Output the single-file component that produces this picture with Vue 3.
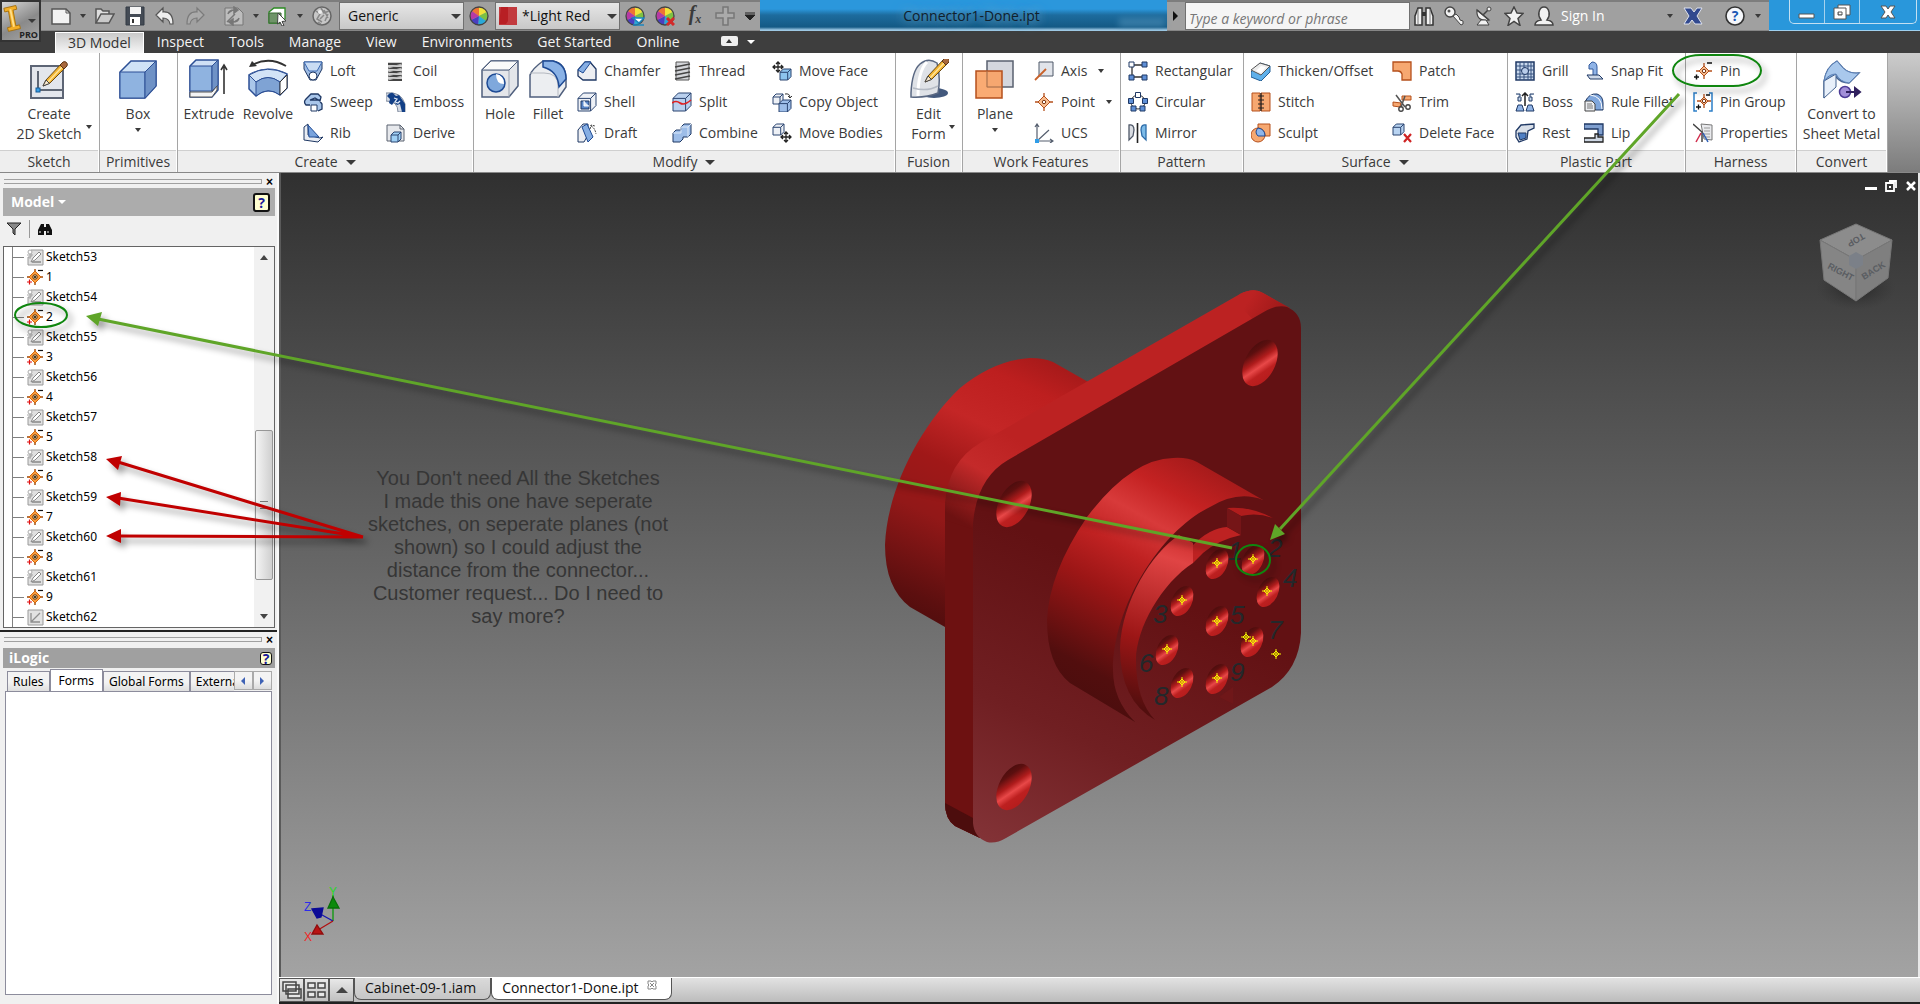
<script setup>
const B = 'stroke="#1f3864"'
const orange = 'fill="#f6a871" stroke="#b5501c"'
const cube = (x, y, s, f = '#eef1f6') =>
  `<path d="M${x} ${y + s * 0.3}l${s * 0.3} ${-s * 0.3}h${s * 0.7}v${s * 0.7}l${-s * 0.3} ${s * 0.3}h${-s * 0.7}z" fill="${f}" stroke="#2a4470"/><path d="M${x} ${y + s * 0.3}h${s * 0.7}v${s * 0.7}m0 ${-s * 0.7}l${s * 0.3} ${-s * 0.3}" fill="none" stroke="#2a4470"/>`
const move = (x, y) =>
  `<path d="M${x} ${y - 5}v10M${x - 5} ${y}h10M${x - 2} ${y - 3}l2-2 2 2M${x - 2} ${y + 3}l2 2 2-2M${x - 3} ${y - 2}l-2 2 2 2M${x + 3} ${y - 2}l2 2-2 2" fill="none" stroke="#222" stroke-width="1.3"/>`
const pencil = (x, y) =>
  `<path d="M${x} ${y}l3-6 16-17 4 4-16 16z" fill="#f3b531" stroke="#6b4a16"/><path d="M${x + 5} ${y - 4}l16-17" stroke="#ffe39a" stroke-width="1.6"/><path d="M${x + 17} ${y - 21}l3-3q2-1 3.500.500t.500 3.500l-3 3z" fill="#a8683c" stroke="#5d3514"/><path d="M${x} ${y}l3-6 3.500 3.500z" fill="#f7e8cf" stroke="#444"/>`
const target = (x, y, r) =>
  `<path d="M${x} ${y - r - 3}v${2 * r + 6}M${x - r - 3} ${y}h${2 * r + 6}" stroke="#b5501c" stroke-width="1.300"/><path d="M${x} ${y - r}l${r} ${r}-${r} ${r}-${r}-${r}z" fill="#f8bd8f" stroke="#b5501c"/><circle cx="${x}" cy="${y}" r="1.700" fill="#fff" stroke="#7a3512"/>`

const art = {
  sketch: `<rect x="2" y="7" width="32" height="32" fill="#e3e6ec" stroke="#5d6575" stroke-width="2"/><path d="M9 12v19h24" fill="none" stroke="#333c4c" stroke-width="1.500"/><rect x="7" y="29" width="4" height="4" fill="#39a0e8" stroke="#155a96"/>${pencil(14, 27)}`,
  box: `<path d="M2 13L13 2h25v25L27 39H2z" fill="#cfe2f6" stroke="#2c4f95" stroke-width="1.500"/><path d="M2 13h25v26H2z" fill="#8fb3e0" stroke="#2c4f95"/><path d="M27 13L38 2v25L27 39z" fill="#6f92c6" stroke="#2c4f95"/>`,
  extrude: `<path d="M1 7l6-6h22v30l-6 7H1z" fill="#cfe0f5" stroke="#2c4f95" stroke-width="1.500"/><path d="M1 7h22v25H1z" fill="#8fb3e0" stroke="#2c4f95"/><path d="M23 7l6-6v25l-6 6z" fill="#6f92c6" stroke="#2c4f95"/><path d="M1 33h22l5-6v4l-5 7H1z" fill="#f4f4f4" stroke="#555"/><path d="M35 35V8M32 11l3-5 3 5" fill="none" stroke="#333" stroke-width="1.600"/>`,
  revolve: `<path d="M1 16Q19 5 39 15v14l-7 7Q20 27 8 37L1 30z" fill="#a9c6ea" stroke="#2c4f95" stroke-width="1.500"/><path d="M1 16l7 7q12-9 24 0l7-8Q19 5 1 16z" fill="#d2e3f6" stroke="#2c4f95"/><path d="M8 23q12-9 24 0v13Q20 27 8 37z" fill="#7fa3d4" stroke="#2c4f95"/><path d="M32 23l7-7v13l-7 7z" fill="#fff" stroke="#333"/><path d="M4 6q17-9 34 1" fill="none" stroke="#333" stroke-width="1.800"/><path d="M1 8l3-6 5 5z" fill="#333"/>`,
  hole: `<path d="M2 11l9-9h27v25l-9 11H2z" fill="#e4e6ea" stroke="#4f5f7d" stroke-width="1.500"/><path d="M2 11h27v27M29 11l9-9" fill="none" stroke="#9aa3b3"/><path d="M2 11l9-9h27l-9 9z" fill="#fafafa" stroke="#4f5f7d"/><circle cx="16" cy="24" r="9" fill="#7fa8dc" stroke="#1e4a94" stroke-width="1.500"/><path d="M16 15a9 9 0 0 1 8 10q-8 0-8-10z" fill="#fff"/>`,
  fillet: `<path d="M2 16Q4 10 15 2h10Q38 5 38 20v8l-7 10H2z" fill="#eceef1" stroke="#4f5f7d" stroke-width="1.500"/><path d="M2 14h14q14 0 14 13v11" fill="none" stroke="#b4b8c0"/><path d="M15 2h10Q38 5 38 20l-7 8Q30 12 15 8z" fill="#8ab2e6" stroke="#1e4a94" stroke-width="1.500"/>`,
  form: `<ellipse cx="25" cy="34" rx="14" ry="5" fill="#43597d"/><path d="M2 34Q3 12 11 5q8-7 17-1 4 14 1 30-12 5-27 4z" fill="#dfe2e7" stroke="#5a6882" stroke-width="1.500"/><path d="M9 37Q9 12 18 3" fill="none" stroke="#fff" stroke-width="3"/><path d="M4 29q14 4 25-2" fill="none" stroke="#b4bac4" stroke-width="1.500"/>${pencil(16, 23)}`,
  plane: `<path d="M12 2h26v26H12z" fill="#d4d7de" stroke="#5a6270" stroke-width="1.500"/><path d="M1 12h26v27H1z" fill="#f9a264" fill-opacity=".9" stroke="#b5501c" stroke-width="1.500"/><path d="M12 12v16h15" fill="none" stroke="#a5714f"/>`,
  sheet: `<path d="M2 22Q4 8 15 2l6 7q6 6 16 5L27 24q-8 0-13-6-6 3-12 21z" fill="#7ea6d8" stroke="#44628f" stroke-width="1.300"/><path d="M2 22l12-7v13L2 39z" fill="#e8f0fa" stroke="#44628f"/><path d="M15 2l6 7q6 6 16 5L27 24q-9-1-13-9Q7 15 2 22 4 8 15 2z" fill="#a9c8ec" stroke="#5a7fb5"/><circle cx="23" cy="33" r="5.500" fill="#a28fd8" stroke="#4c3b96" stroke-width="1.500"/><path d="M24 33h8M33 29l5 4-5 4z" fill="#30205e" stroke="#30205e" stroke-width="2"/>`,
  loft: `<path d="M1 1h18v7l-6 11H7L1 8z" fill="#9dbbe3" ${B}/><path d="M1 1h18l-5 9H6z" fill="#c9dcf3" stroke="#3b6bb5"/><circle cx="10" cy="15" r="4" fill="#fff" ${B}/>`,
  sweep: `<path d="M7 13H3q-3-3 0-6l5-5h7l3 3-1 4-5-3-5 2h9l3 4v5l-4 2" fill="#a9c6ea" ${B} stroke-width="1.300"/><path d="M8 13h6v6H8z" fill="#fff" ${B}/>`,
  rib: `<path d="M1 17V4l4-3v11l12 3 3-1-5 5z" fill="#e9edf3" ${B}/><path d="M5 2l11 12H6z" fill="#79a3dd" stroke="#1e4a94"/>`,
  coil: `<path d="M2 3h14M2 7h14M2 11h14M2 15h14M2 19h14" stroke="#444" stroke-width="2.400"/><path d="M16 3L2 7M16 7L2 11M16 11L2 15M16 15L2 19" stroke="#bbb" stroke-width="1.200"/>`,
  emboss: `<path d="M0 1Q15-1 19 12v8h-7Q12 9 0 9z" fill="#d5dbe5" stroke="#7d889b"/><path d="M1 4q3-4 6-3l3 3 3-1 6 9v8h-3l-2-8-3 1-3-3-2 3-3-2 1-4z" fill="#123f86"/><path d="M8 6l3 1-2 3 3 1 2-2" fill="none" stroke="#dfe8f5" stroke-width="1.300"/>`,
  derive: `<path d="M1 2h13l4 4v12H1z" fill="#e6e8ec" stroke="#5a6270"/><path d="M14 2v4h4" fill="none" stroke="#5a6270"/>${cube(5, 9, 10, '#9fd0f5')}`,
  chamfer: `<path d="M1 9L8 1h5l6 7v11H6l-5-4z" fill="#eceef2" ${B} stroke-width="1.300"/><path d="M1 9L8 1h6L6 12z" fill="#86aee3" stroke="#1e4a94"/>`,
  shell: `${cube(1, 1, 18)}<path d="M4 9h8v8H4z" fill="#5a87c9" ${B}/><path d="M7 9v5h5" fill="#dfeaf8" stroke="#fff"/>`,
  draft: `<path d="M1 7l5-6h5v11l-4 7H1z" fill="#eceef2" ${B}/><path d="M5 4l5-3 6 13-5 5z" fill="#86aee3" stroke="#1e4a94"/><path d="M14 3q4 2 5 8M13 6l1-4 4 1" fill="none" stroke="#333" stroke-dasharray="2 1"/>`,
  thread: `<path d="M4 1h13v18H4z" fill="#d4d6da" stroke="#555"/><path d="M3 6l15-3M3 10l15-3M3 14l15-3M3 18l15-3" stroke="#444" stroke-width="1.400"/>`,
  split: `${cube(1, 1, 18, '#b9d0ee')}<path d="M0 11q4-3 8 0t11-3" fill="none" stroke="#e02020" stroke-width="1.600"/>`,
  combine: `<path d="M1 10l3-3h5V4l3-3h7v10l-3 3h-5v2l-3 3H1z" fill="#9dbde8" ${B}/><path d="M9 4h7v10M1 10h8v-6M16 4l3-3" fill="none" stroke="#dce8f8"/>`,
  moveface: `${move(6, 6)}${cube(8, 8, 11, '#8cc4ee')}`,
  copy: `${cube(1, 2, 10)}${cube(7, 8, 12, '#9dbde8')}<path d="M13 2q5-1 5 4m-2-2l2 2 2-2" fill="none" stroke="#333"/>`,
  movebodies: `${cube(1, 1, 11)}${move(14, 14)}`,
  axis: `<path d="M5 1h14v14H5z" fill="#e1e4ea" stroke="#4f5868"/><path d="M1 19L12 8" stroke="#c8622a" stroke-width="1.800"/>`,
  point: target(10, 10, 6),
  ucs: `<path d="M3 1v17h16M3 18L15 7M1 4l2-3 2 3M16 16l3 2-3 2" fill="none" stroke="#555e6e" stroke-width="1.200"/><rect x="1" y="16" width="4" height="4" fill="#2f9de8"/>`,
  rect: `<path d="M4 4h12M4 4v12h12" fill="none" stroke="#333" stroke-width="1.300"/><path d="M1 1h5v5H1z" fill="#fff" ${B}/><path d="M14 1h5v5h-5zM1 14h5v5H1zM14 14h5v5h-5z" fill="#5f8fd6" ${B}/>`,
  circ: `<circle cx="10" cy="10" r="7" fill="none" stroke="#333"/><path d="M7.500.500h5v5h-5z" fill="#fff" ${B}/><path d="M.500 6.500h5v5h-5zM14.500 6.500h5v5h-5zM3 14h5v5H3zM12 14h5v5h-5z" fill="#5f8fd6" ${B}/>`,
  mirror: `<path d="M1 2q5-1 5 5l-1 6-4 4z" fill="#d9dce2" stroke="#4f5868" stroke-width="1.300"/><path d="M9.500 0v20" stroke="#222" stroke-width="1.600"/><path d="M18 2q-5-1-5 5l1 6 4 4z" fill="#7dbbe8" stroke="#2c6ba8" stroke-width="1.300"/>`,
  thicken: `<path d="M0 11L9 2l10 3v6l-9 9-10-4z" fill="#5fb0ea" stroke="#235f95"/><path d="M0 9L9 2l10 3-9 9z" fill="#ececec" stroke="#555"/><path d="M5 10l5-5 5 1-5 6z" fill="#fff"/>`,
  stitch: `<path d="M1 1h8v18H1zM10 1h9v18h-9z" ${orange}/><path d="M10 1v18M7 4h6M7 8h6M7 12h6M7 16h6" stroke="#222" stroke-width="1.200"/>`,
  sculpt: `<path d="M7 1h12v12H7z" ${orange}/><circle cx="7" cy="12" r="7" ${orange}/><path d="M7 5q7 1 7 8H7q-4-4 0-8z" fill="#8fb6ea" stroke="#1e4a94"/>`,
  patch: `<path d="M1 1h18v18h-9v-6q-1-3-4-3H1z" ${orange} stroke-width="1.300"/>`,
  trim: `<path d="M10 4h9v4h-9zM1 10l8 1-1 4-7-1z" ${orange}/><path d="M4 3l9 12M13 4L9 15" stroke="#555" stroke-width="1.500"/><circle cx="9" cy="17" r="2.200" fill="none" stroke="#444" stroke-width="1.400"/><circle cx="16" cy="15" r="2.200" fill="none" stroke="#444" stroke-width="1.400"/>`,
  del: `${cube(1, 1, 11, '#b9d4f2')}<path d="M12 11l7 8M19 11l-7 8" stroke="#cf2323" stroke-width="2.200"/>`,
  grill: `<path d="M1 1h18v18H1z" fill="#c9d9ee" ${B} stroke-width="1.500"/><path d="M1 5h18M1 9h18M1 13h18M1 16h18M5 1v18M9 1v18M13 1v18M16 1v18" stroke="#35517f"/><circle cx="10" cy="10" r="3.500" fill="#b9cdea" ${B}/>`,
  boss: `<path d="M1 2h4v3H3v4h3V5M19 2h-4v3h2v4h-3V5" fill="#c9d9ee" ${B}/><path d="M10 14V1M7 4l3-3 3 3" fill="none" stroke="#222" stroke-width="1.500"/><path d="M3 13h4l2 6H1zM13 13h4l2 6h-8z" fill="#8fb3e6" ${B}/>`,
  rest: `<path d="M1 8l5-6 13-1v4l-6 3-1 8-8 3-3-5z" fill="#d9dfe8" ${B} stroke-width="1.300"/><path d="M3 10h8v5l-6 2z" fill="#4f7fc4" ${B}/>`,
  snap: `<path d="M8 1q5 0 5 5v9H9V8H5V4z" fill="#8fb3e6" stroke="#31599c"/><path d="M3 14h12l4 4H6z" fill="#cdd9ea" ${B}/>`,
  rule: `<path d="M1 10q4-9 12-8 6 2 6 9v7h-7z" fill="#7fa6dc" ${B}/><path d="M6 3q12 1 12 14" fill="none" stroke="#fff"/><path d="M1 9h7l3 3v7H1z" fill="#eceef2" stroke="#444"/><path d="M3 12h5M3 14h6M3 16h6" stroke="#777"/>`,
  lip: `<path d="M0 1h19v11h-5V6H0z" fill="#7f9fcf" ${B} stroke-width="1.300"/><path d="M0 15h11v-4h3v3h5v5H0z" fill="#cfd8e5" stroke="#222" stroke-width="1.300"/>`,
  pin: `${target(11, 10, 5)}<path d="M1 16h5M3.500 13.500v5M14 2h5" stroke="#111" stroke-width="1.500"/>`,
  pingroup: `<path d="M4 1H1v18h3M16 1h3v18h-3" fill="none" stroke="#2d7fc8" stroke-width="1.500"/>${target(11, 9, 4)}<path d="M3 15h5M5.500 12.500v5M13 3h4" stroke="#111" stroke-width="1.300"/>`,
  props: `<path d="M8 1l11 1v15l-8-1z" fill="#e9eaed" stroke="#777"/><path d="M11 5h6M11 8h6M11 11h6M11 14h6" stroke="#999"/><path d="M0 1l9 8v10" fill="none" stroke="#444" stroke-width="1.500"/><path d="M8 10L3 19" stroke="#d02b4b" stroke-width="1.500"/><path d="M10 10l5 9" stroke="#2d5fb8" stroke-width="1.500"/>`,
  new: '<path d="M1 3h14l4 4v11H1z" fill="#f3f3f3" stroke="#555" stroke-width="1.500"/><path d="M15 3v4h4" fill="none" stroke="#555"/>',
  open: '<path d="M1 17V3h5l2 2h6v3" fill="#ddd" stroke="#555" stroke-width="1.500"/><path d="M1 17l5-9h13l-5 9z" fill="#c9c9c9" stroke="#555" stroke-width="1.500"/>',
  save: '<path d="M1 1h18v18H1z" fill="#444b55" stroke="#333b44"/><path d="M5 1h11v7H5z" fill="#f4f4f4"/><path d="M5 11h10v8H5z" fill="#fff"/><path d="M7 13h2v4H7z" fill="#333"/>',
  undo: '<path d="M1 9l7-7v4q10-1 10 12h-3q-1-6-7-6v4z" fill="#eee" stroke="#555" stroke-width="1.200"/>',
  redo: '<path d="M19 9l-7-7v4Q2 5 2 18h3q1-6 7-6v4z" fill="#aaa" stroke="#7b7b7b" stroke-width="1.200"/>',
  quick: '<path d="M1 2h13l5 5v12H1z" fill="#bdbdbd" stroke="#777"/><path d="M4 8q1-4 6-4M10 1v6l4-3zM15 12q-1 4-6 4M9 13v6l-4-3zM3 16l8-8" fill="#777" stroke="#777" stroke-width="1.500"/>',
  select: '<path d="M1 6l5-4h11v11l-4 4H1z" fill="#fff" stroke="#2b8a22" stroke-width="1.300"/><path d="M1 7h12v10H1z" fill="#6f9468" stroke="#3a6b34"/><path d="M10 7l8 8-4 .500 2 4-2 .500-2-4-2.500 2z" fill="#fff" stroke="#444"/>',
  sphere: '<circle cx="10" cy="10" r="9" fill="#c7c7c7" stroke="#666" stroke-width="1.500"/><path d="M4 5l4 3-3 5 5 3M9 2l3 5 5-2M12 9l-4 4M16 8l-3 7M6 16l3 2M12 4l4 8" fill="none" stroke="#888" stroke-width="1.500"/><circle cx="8" cy="6" r="2" fill="#eee"/>',
  wheel: '<path d="M10 10V1a9 9 0 0 1 8 5z" fill="#f1e33a"/><path d="M10 10l8-4a9 9 0 0 1-1 9z" fill="#7cc142"/><path d="M10 10l7 5a9 9 0 0 1-8 4z" fill="#2aa9d8"/><path d="M10 10l-1 9a9 9 0 0 1-7-5z" fill="#4a3fc0"/><path d="M10 10l-8 4a9 9 0 0 1 1-9z" fill="#b63aa5"/><path d="M10 10L3 5a9 9 0 0 1 7-4z" fill="#ee7433"/><circle cx="10" cy="10" r="9" fill="none" stroke="#444" stroke-width="1.300"/>',
  plus: '<path d="M8 1h5v6h6v5h-6v7H8v-7H1V7h7z" fill="#aaa" stroke="#777" stroke-width="1.500"/>',
  binoc: '<path d="M1 10l3-8h4v17H1zM19 10l-3-8h-4v17h7z" fill="#f2f2f2" stroke="#333" stroke-width="1.500"/><path d="M8 6h4v4H8z" fill="#333"/><path d="M4 3v16M16 3v16" stroke="#777"/>',
  key: '<circle cx="6" cy="6" r="5" fill="#f2f2f2" stroke="#444" stroke-width="1.400"/><circle cx="5" cy="5" r="1.500" fill="#555"/><path d="M9 10l8 9 2-1v-3l-3-1-1-3-3-3z" fill="#f2f2f2" stroke="#444"/>',
  dish: '<path d="M3 4q-1 12 12 10z" fill="#f2f2f2" stroke="#444" stroke-width="1.200"/><path d="M3 4l12 10M9 9l6-6" stroke="#444" stroke-width="1.500"/><circle cx="15" cy="3" r="2" fill="#f2f2f2" stroke="#444"/><path d="M7 14l-4 5h12l-3-5z" fill="#f2f2f2" stroke="#444"/>',
  star: '<path d="M10 1l3 6 6 .500-5 5 2 7-6-4-6 4 2-7-5-5L7 7z" fill="#f2f2f2" stroke="#444" stroke-width="1.500"/>',
  person: '<path d="M1 19q0-4 6-5-3-4-2-8 1-5 5-5t5 5q1 4-2 8 6 1 6 5z" fill="#f2f2f2" stroke="#444" stroke-width="1.500"/>',
  exch: '<path d="M1 2h7l3 4 3-4h5l-5 8 5 8h-7l-3-4-3 4H1l5-8z" fill="#31498f" stroke="#dfe3ee"/>',
  help: '<circle cx="10" cy="10" r="9" fill="#f5f7fb" stroke="#333" stroke-width="1.600"/>',
  tpin: '<path d="M8 0v16M0 8h16" stroke="#a04808" stroke-width="1.400"/><path d="M8 2l6 6-6 6-6-6z" fill="#fb9b3c" stroke="#d0680c"/><circle cx="8" cy="8" r="2.200" fill="#fff0c0" stroke="#5a2b05"/><circle cx="8" cy="8" r="1" fill="#000"/><path d="M0 13h5M2.500 10.500v5" stroke="#e01010" stroke-width="1.200"/><path d="M11 1.500h5" stroke="#111" stroke-width="1.200"/>',
  tsketch: '<path d="M4 1h12v15H1V8h3z" fill="#e0e0e0" stroke="#9a9a9a"/><path d="M5 13h9" stroke="#888" stroke-width="1.500"/><path d="M4 13l2-4 6-6 2 2-6 6z" fill="#fff" stroke="#888"/><circle cx="3" cy="3" r="2" fill="#fff" stroke="#aaa"/><path d="M3 5v5M0 6h6" stroke="#aaa"/>',
  tplain: '<path d="M1 1h15v15H1z" fill="#e2e2e2" stroke="#9a9a9a"/><path d="M4 4v9h9M4 13l9-9" stroke="#8f8f8f" stroke-width="1.300" fill="none"/>'
}

const panels = [
  { k: 'sketch', name: 'Sketch', cols: [{ big: 'sketch', lines: ['Create', '2D Sketch'], split: true }] },
  { k: 'prim', name: 'Primitives', cols: [{ big: 'box', lines: ['Box'], drop: true }] },
  { k: 'create', name: 'Create', more: true, cols: [
    { big: 'extrude', lines: ['Extrude'] }, { big: 'revolve', lines: ['Revolve'] },
    { rows: [['loft', 'Loft'], ['sweep', 'Sweep'], ['rib', 'Rib']] },
    { rows: [['coil', 'Coil'], ['emboss', 'Emboss'], ['derive', 'Derive']] }] },
  { k: 'modify', name: 'Modify', more: true, cols: [
    { big: 'hole', lines: ['Hole'] }, { big: 'fillet', lines: ['Fillet'] },
    { rows: [['chamfer', 'Chamfer'], ['shell', 'Shell'], ['draft', 'Draft']] },
    { rows: [['thread', 'Thread'], ['split', 'Split'], ['combine', 'Combine']] },
    { rows: [['moveface', 'Move Face'], ['copy', 'Copy Object'], ['movebodies', 'Move Bodies']] }] },
  { k: 'fusion', name: 'Fusion', cols: [{ big: 'form', lines: ['Edit', 'Form'], split: true }] },
  { k: 'work', name: 'Work Features', cols: [
    { big: 'plane', lines: ['Plane'], drop: true },
    { rows: [['axis', 'Axis', true], ['point', 'Point', true], ['ucs', 'UCS']] }] },
  { k: 'pattern', name: 'Pattern', cols: [{ rows: [['rect', 'Rectangular'], ['circ', 'Circular'], ['mirror', 'Mirror']] }] },
  { k: 'surface', name: 'Surface', more: true, cols: [
    { rows: [['thicken', 'Thicken/Offset'], ['stitch', 'Stitch'], ['sculpt', 'Sculpt']] },
    { rows: [['patch', 'Patch'], ['trim', 'Trim'], ['del', 'Delete Face']] }] },
  { k: 'plastic', name: 'Plastic Part', cols: [
    { rows: [['grill', 'Grill'], ['boss', 'Boss'], ['rest', 'Rest']] },
    { rows: [['snap', 'Snap Fit'], ['rule', 'Rule Fillet'], ['lip', 'Lip']] }] },
  { k: 'harness', name: 'Harness', cols: [{ rows: [['pin', 'Pin'], ['pingroup', 'Pin Group'], ['props', 'Properties']] }] },
  { k: 'convert', name: 'Convert', cols: [{ big: 'sheet', lines: ['Convert to', 'Sheet Metal'] }] }
]
const tabs = ['3D Model', 'Inspect', 'Tools', 'Manage', 'View', 'Environments', 'Get Started', 'Online']
const tree = []
for (let n = 53; n <= 62; n++) {
  tree.push({ icon: n === 62 ? 'tplain' : 'tsketch', label: 'Sketch' + n })
  if (n < 62) tree.push({ icon: 'tpin', label: String(n - 52) })
}
const pins = [[1217, 564], [1253, 560], [1268, 592], [1182, 601], [1217, 621], [1252, 642], [1167, 650], [1182, 683], [1217, 679]]
const marks = [[1217, 563], [1253, 559], [1267, 591], [1182, 600], [1217, 621], [1246, 637], [1253, 641], [1167, 649], [1182, 682], [1217, 678], [1276, 654]]
const digits = [['1', 1228, 560], ['2', 1268, 557], ['3', 1153, 623], ['4', 1283, 587], ['5', 1230, 624], ['6', 1139, 672], ['7', 1268, 639], ['8', 1154, 705], ['9', 1230, 681]]
const bores = [[1260, 363], [1014, 504], [1014, 787]]
</script>

<template>
  <div class="app">
    <header class="titlebar">
      <div class="quick">
        <button class="ib" aria-label="New"><svg viewBox="0 0 20 20" v-html="art.new"></svg></button>
        <i class="tri mid"></i>
        <button class="ib" aria-label="Open"><svg viewBox="0 0 20 20" v-html="art.open"></svg></button>
        <button class="ib" aria-label="Save"><svg viewBox="0 0 20 20" v-html="art.save"></svg></button>
        <button class="ib" aria-label="Undo"><svg viewBox="0 0 20 20" v-html="art.undo"></svg></button>
        <button class="ib redo" aria-label="Redo"><svg viewBox="0 0 20 20" v-html="art.redo"></svg></button>
        <button class="ib" aria-label="Update"><svg viewBox="0 0 20 20" v-html="art.quick"></svg></button>
        <i class="tri mid"></i>
        <button class="ib" aria-label="Select"><svg viewBox="0 0 20 20" v-html="art.select"></svg></button>
        <i class="tri mid"></i>
        <button class="ib" aria-label="Material"><svg viewBox="0 0 20 20" v-html="art.sphere"></svg></button>
        <div class="combo"><select aria-label="Material"><option>Generic</option></select><i class="tri"></i></div>
        <button class="ib tight" aria-label="Appearance"><svg viewBox="0 0 20 20" v-html="art.wheel"></svg></button>
        <div class="combo swatch"><svg viewBox="0 0 18 18"><path d="M0 0h18v18H0z" fill="#c23a3e" /><path d="M2 0h7v14l-2 3H0z" fill="#b81f24" /></svg><select aria-label="Appearance"><option>*Light Red</option></select><i class="tri"></i></div>
        <button class="ib" aria-label="Adjust"><svg viewBox="0 0 20 20"><g v-html="art.wheel"></g><path d="M8 12h11l-5 5zM8 19h11" fill="#fff" stroke="#1b86c0" stroke-width="1.500" /></svg></button>
        <button class="ib" aria-label="Clear"><svg viewBox="0 0 20 20"><g v-html="art.wheel"></g><path d="M12 12l7 7M19 12l-7 7" stroke="#d42a2a" stroke-width="3" /></svg></button>
        <button class="ib fx" aria-label="Parameters">f<sub>x</sub></button>
        <button class="ib" aria-label="Add"><svg viewBox="0 0 20 20" v-html="art.plus"></svg></button>
        <svg class="custom" viewBox="0 0 10 8"><path d="M0 1h10M0 3h10L5 8z" fill="#222" stroke="#222" /></svg>
      </div>
      <div class="caption"><span>Connector1-Done.ipt</span><i class="haze"></i></div>
      <div class="info">
        <i class="play"></i>
        <input type="text" aria-label="Search" placeholder="Type a keyword or phrase">
        <button class="ib" aria-label="Search help"><svg viewBox="0 0 20 20" v-html="art.binoc"></svg></button>
        <button class="ib" aria-label="Subscription"><svg viewBox="0 0 20 20" v-html="art.key"></svg></button>
        <button class="ib" aria-label="Communication"><svg viewBox="0 0 20 20" v-html="art.dish"></svg></button>
        <button class="ib" aria-label="Favorites"><svg viewBox="0 0 20 20" v-html="art.star"></svg></button>
        <button class="ib" aria-label="Account"><svg viewBox="0 0 20 20" v-html="art.person"></svg></button>
        <a href="#" class="signin">Sign In</a>
        <i class="tri"></i>
        <button class="ib" aria-label="Exchange"><svg viewBox="0 0 20 20" v-html="art.exch"></svg></button>
        <button class="ib help" aria-label="Help"><svg viewBox="0 0 20 20" v-html="art.help"></svg><b>?</b></button>
        <i class="tri"></i>
      </div>
      <div class="winbtns">
        <div class="wgroup">
          <button aria-label="Minimize"><svg viewBox="0 0 20 16"><path d="M2 10h15v4H2z" fill="#fff" stroke="#555" /></svg></button>
          <button aria-label="Restore"><svg viewBox="0 0 20 16"><path d="M6 1h12v10H6z" fill="#fff" stroke="#555" /><path d="M2 4h12v11H2zM6 8h4v3H6z" fill="#fff" stroke="#555" fill-rule="evenodd" /></svg></button>
          <button aria-label="Close"><svg viewBox="0 0 20 16"><path d="M3 2h5l2 3 2-3h5l-4 6 4 6h-5l-2-3-2 3H3l4-6z" fill="#fff" stroke="#555" /></svg></button>
        </div>
      </div>
      <button class="appbtn" aria-label="Application menu">
        <svg viewBox="0 0 26 30"><path d="M2 5l13-3 1 4-4 1 3 17 4-1 1 4-13 3-1-4 4-1L7 8 3 9z" fill="#f3ae26" stroke="#a5700c" /><path d="M9 6l4 19" stroke="#ffdf8a" stroke-width="2" /></svg>
        <i class="tri"></i><span>PRO</span>
      </button>
    </header>

    <nav class="tabs">
      <a v-for="(t, i) in tabs" :key="t" href="#" :class="{ on: i === 0 }">{{ t }}</a>
      <span class="pill"><i></i></span><i class="tri light"></i>
    </nav>

    <section class="ribbon">
      <div v-for="p in panels" :key="p.k" class="panel" :class="p.k">
        <div class="cmds">
          <div v-for="(c, ci) in p.cols" :key="ci" class="col">
            <button v-if="c.big" class="big" :class="{ splitbtn: c.split }">
              <svg viewBox="0 0 40 40" v-html="art[c.big]"></svg>
              <span v-for="l in c.lines" :key="l">{{ l }}</span>
              <i v-if="c.drop || c.split" class="tri"></i>
            </button>
            <template v-else>
              <button v-for="r in c.rows" :key="r[1]" class="cmd">
                <svg viewBox="0 0 20 20" v-html="art[r[0]]"></svg><span>{{ r[1] }}</span><i v-if="r[2]" class="tri"></i>
              </button>
            </template>
          </div>
        </div>
        <div class="pname">{{ p.name }}<i v-if="p.more" class="tri big-tri"></i></div>
      </div>
      <div class="rest-fill"></div>
    </section>

    <main class="work-area">
      <aside class="side">
        <div class="grip"><span></span><button aria-label="Close panel">×</button></div>
        <div class="phead">Model<i class="tri light"></i><span class="q">?</span></div>
        <div class="ptools">
          <svg viewBox="0 0 16 14"><path d="M1 1h14L9 7v6l-2-2V7z" fill="#888" stroke="#222" /></svg>
          <span></span>
          <svg viewBox="0 0 16 14"><path d="M1 8l3-6h3v11H1zM15 8l-3-6H9v11h6zM7 5h2v4H7z" fill="#111" /><path d="M3 9v2M11 9v2" stroke="#fff" /></svg>
        </div>
        <div class="treebox">
          <ul>
            <li v-for="n in tree" :key="n.label"><svg viewBox="0 0 17 17" v-html="art[n.icon]"></svg>{{ n.label }}</li>
          </ul>
          <div class="scroll"><i class="up"></i><div class="thumb"><b></b></div><i class="down"></i></div>
        </div>
        <div class="split"></div>
        <div class="grip"><span></span><button aria-label="Close panel">×</button></div>
        <div class="phead small">iLogic<span class="q">?</span></div>
        <div class="ftabs">
          <button>Rules</button><button class="on">Forms</button><button>Global Forms</button><button class="cut">External</button>
          <button class="nav" aria-label="Previous tab"><i class="la"></i></button><button class="nav" aria-label="Next tab"><i class="ra"></i></button>
        </div>
        <div class="fbox"></div>
      </aside>

      <div class="docs">
        <div class="view">
          <svg class="model" viewBox="281 173 1637 804" preserveAspectRatio="xMinYMin meet">
            <defs>
              <linearGradient id="gBack" gradientUnits="userSpaceOnUse" x1="920" y1="640" x2="1060" y2="345">
                <stop offset="0" stop-color="#480c0c" /><stop offset=".12" stop-color="#5c0f0f" /><stop offset=".36" stop-color="#921818" /><stop offset=".52" stop-color="#a01818" /><stop offset=".68" stop-color="#c42626" /><stop offset=".84" stop-color="#bd1f1f" /><stop offset="1" stop-color="#9a1717" />
              </linearGradient>
              <linearGradient id="gFront" gradientUnits="userSpaceOnUse" x1="1085" y1="710" x2="1225" y2="455">
                <stop offset="0" stop-color="#4a0d0d" /><stop offset=".13" stop-color="#520e0e" /><stop offset=".4" stop-color="#9c1616" /><stop offset=".55" stop-color="#c02222" /><stop offset=".68" stop-color="#d83a3a" /><stop offset=".8" stop-color="#c42222" /><stop offset="1" stop-color="#981717" />
              </linearGradient>
              <linearGradient id="gWall" gradientUnits="userSpaceOnUse" x1="1145" y1="710" x2="1205" y2="530">
                <stop offset="0" stop-color="#520e0e" /><stop offset=".35" stop-color="#9c1616" /><stop offset=".8" stop-color="#e04444" /><stop offset="1" stop-color="#c42222" />
              </linearGradient>
              <linearGradient id="gFace" gradientUnits="userSpaceOnUse" x1="985" y1="845" x2="1110" y2="570">
                <stop offset="0" stop-color="#833337" /><stop offset=".45" stop-color="#701f22" /><stop offset="1" stop-color="#621113" />
              </linearGradient>
              <linearGradient id="gSide" gradientUnits="userSpaceOnUse" x1="950" y1="515" x2="1000" y2="430">
                <stop offset="0" stop-color="#6d1111" /><stop offset=".55" stop-color="#c42a2a" /><stop offset="1" stop-color="#bc2222" />
              </linearGradient>
              <linearGradient id="gEnd" gradientUnits="userSpaceOnUse" x1="1255" y1="290" x2="1290" y2="312">
                <stop offset="0" stop-color="#bc2222" /><stop offset="1" stop-color="#981717" />
              </linearGradient>
              <linearGradient id="gHole" x1=".9" y1=".85" x2=".1" y2=".15">
                <stop offset="0" stop-color="#b51c1c" /><stop offset=".25" stop-color="#bd2020" /><stop offset=".42" stop-color="#e84848" /><stop offset=".58" stop-color="#b01c1c" /><stop offset=".82" stop-color="#5c0f0f" /><stop offset="1" stop-color="#4a0d0d" />
              </linearGradient>
            </defs>
            <path d="M945 627L910 607Q885 588 885 545C887 490 920 426 960 388Q994 360 1030 358Q1044 358 1053 362L1090 383 1040 500 945 560z" fill="url(#gBack)" />
            <path d="M945 503Q948 462 980 443L1240 294Q1254 287 1263 293L1287 307 1240 360 1008 480 973 530V823L980 838 955 826Q945 819 945 803z" fill="url(#gSide)" />
            <path d="M1240 294Q1254 287 1263 293L1290 308 1255 322 1235 300z" fill="url(#gEnd)" />
            <path d="M945 803V520l30 10V823l5 15-25-12Q945 819 945 803z" fill="#6d1111" />
            <path d="M945 803l28 15 7 20-25-12Q945 819 945 803z" fill="#4c0d0d" />
            <path d="M973 523Q977 478 1008 460L1262 313Q1276 304 1287 307Q1301 313 1301 328V633Q1299 669 1272 687L1006 838Q996 844 987 842Q974 837 973 823z" fill="url(#gFace)" />
            <g fill="url(#gHole)">
              <ellipse v-for="(b, i) in bores" :key="i" :cx="b[0]" :cy="b[1]" rx="15" ry="25" :transform="`rotate(28 ${b[0]} ${b[1]})`" />
            </g>
            <path d="M1135 722L1070 683Q1047 665 1047 620Q1049 573 1087 517Q1131 459 1173 458Q1187 457 1197 462L1263 500 1220 580z" fill="url(#gFront)" />
            <path d="M1135 722Q1113 700 1113 670C1113 605 1162 530 1210 507Q1238 490 1263 500L1285 520V640L1170 722z" fill="url(#gFace)" />
            <path d="M1155 720Q1120 700 1120 648C1122 600 1152 553 1179 535L1193 543V563C1162 583 1136 628 1136 660Q1136 700 1155 720z" fill="url(#gWall)" />
            <path d="M1193 545Q1210 528 1227 527L1241 535Q1218 540 1203 553L1193 563z" fill="#bd2222" />
            <path d="M1227 508Q1250 506 1273 518Q1257 512 1241 516z" fill="#b01c1c" />
            <path d="M1227 508L1241 516V535L1227 527z" fill="#751517" />
            <path d="M1219 697L1233 687V704z" fill="#6f1719" />
            <g fill="url(#gHole)">
              <ellipse v-for="(b, i) in pins" :key="i" :cx="b[0]" :cy="b[1]" rx="10" ry="16" :transform="`rotate(26 ${b[0]} ${b[1]})`" />
            </g>
            <text v-for="d in digits" :key="d[0]" :x="d[1]" :y="d[2]" class="digit">{{ d[0] }}</text>
            <path v-for="(m, i) in marks" :key="i" :d="`M${m[0]} ${m[1] - 3}l3 3-3 3-3-3zm0-2v10m-5-5h10`" fill="none" stroke="#f6f600" />
            <g stroke-width="1.300">
              <path d="M333 921v-26" stroke="#0a9a0a" /><path d="M333 897l6 11h-11z" fill="#0c8a0c" stroke="#087008" />
              <path d="M333 921l-20-11" stroke="#1414b0" /><path d="M312 909l11-1-2 9-4 1z" fill="#0a0a96" stroke="#0a0a96" />
              <path d="M333 921l-20 12" stroke="#b01010" /><path d="M312 934l5-9 6 9z" fill="#b81414" stroke="#900c0c" />
            </g>
            <text x="329" y="896" class="ax" fill="#28d828">Y</text>
            <text x="304" y="911" class="ax" fill="#2c2ce8">Z</text>
            <text x="304" y="941" class="ax" fill="#f02828">X</text>
          </svg>
          <div class="mdi">
            <button aria-label="Minimize document"><svg viewBox="0 0 12 12"><path d="M0 7h12v3H0z" fill="#fff" /></svg></button>
            <button aria-label="Restore document"><svg viewBox="0 0 12 12"><path d="M4 1h7v7M1 3h8v8H1z" fill="none" stroke="#fff" stroke-width="1.800" /><path d="M4 6h2v2H4z" fill="#fff" /></svg></button>
            <button aria-label="Close document"><svg viewBox="0 0 12 12"><path d="M2 2l8 8M10 2l-8 8" stroke="#fff" stroke-width="2.500" /></svg></button>
          </div>
          <svg class="cube" viewBox="0 0 80 90">
            <defs><radialGradient id="gShade"><stop offset="0" stop-color="#1c1c1c" stop-opacity=".8" /><stop offset="1" stop-color="#333" stop-opacity="0" /></radialGradient></defs>
            <ellipse cx="40" cy="66" rx="40" ry="22" fill="url(#gShade)" />
            <path d="M4 18L40 2l36 16-36 20z" fill="#8c8c8c" stroke="#777" />
            <path d="M4 18l36 20v41L8 58z" fill="#858585" stroke="#777" />
            <path d="M76 18L40 38v41l32-23z" fill="#7f7f7f" stroke="#777" />
            <path d="M33 34l7-4 7 4v9l-7 4-7-4z" fill="#7b8088" />
            <text x="40" y="21" text-anchor="middle" transform="rotate(150 40 18)">TOP</text>
            <text x="11" y="46" transform="rotate(28 11 46)">RIGHT</text>
            <text x="48" y="58" transform="rotate(-32 48 58)">BACK</text>
          </svg>
          <p class="note">You Don't need All the Sketches<br>I made this one have seperate<br>sketches, on seperate planes (not<br>shown) so I could adjust the<br>distance from the connector...<br>Customer request... Do I need to<br>say more?</p>
        </div>
        <div class="docbar">
          <button class="db" aria-label="Cascade"><svg viewBox="0 0 20 18"><path d="M1 1h13v9H1zM4 4h13v9H4zM6 8h13v9H6z" fill="#e8e8e8" stroke="#444" stroke-width="1.500" /></svg></button>
          <button class="db" aria-label="Tile"><svg viewBox="0 0 20 18"><path d="M1 2h7v5H1zM11 2h7v5h-7zM1 11h7v5H1zM11 11h7v5h-7z" fill="#e8e8e8" stroke="#444" stroke-width="1.500" /></svg></button>
          <button class="db" aria-label="List"><i class="up"></i></button>
          <button class="dt">Cabinet-09-1.iam</button>
          <button class="dt on">Connector1-Done.ipt<svg viewBox="0 0 10 10"><path d="M1 1h3l1 1 1-1h3v3L8 5l1 1v3H6L5 8 4 9H1V6l1-1-1-1zM3 3l4 4M7 3L3 7" fill="none" stroke="#888" /></svg></button>
        </div>
      </div>
    </main>

    <svg class="callouts" viewBox="0 0 1920 1004" preserveAspectRatio="xMinYMin meet">
      <g fill="none" stroke="#0f860f" stroke-width="2">
        <ellipse cx="41" cy="315" rx="26" ry="12" />
        <rect x="1673" y="55" width="88" height="31" rx="28" ry="16" />
        <ellipse cx="1253" cy="560" rx="17" ry="15" />
      </g>
      <g stroke="#5fa528" fill="#5fa528">
        <path d="M1232 548L98 319M1679 94L1280 529" fill="none" stroke-width="3" />
        <path d="M86 316l16-4-4 14zM1270 540l5-16 10 10z" stroke="none" />
      </g>
      <g stroke="#c00000" fill="#c00000">
        <path d="M363 537L118 462M363 537L118 498M363 537L118 536" fill="none" stroke-width="3" />
        <path d="M106 459l16-3-4 14zM106 497l15-5-1 14zM106 536l15-7v14z" stroke="none" />
      </g>
    </svg>
  </div>
</template>

<style>
body { margin: 0; }
</style>
<style scoped>
.app { position: relative; min-height: 100vh; display: flex; flex-direction: column; overflow: hidden; background: #f0f0f0; font: 14px/20px "Open Sans", "Noto Sans", sans-serif; color: #3a3a3a; }
button { font: inherit; color: inherit; background: none; border: 0; padding: 0; margin: 0; }
a { color: inherit; text-decoration: none; }
svg { display: block; flex: none; }
.tri { display: block; flex: none; width: 0; height: 0; border: 3px solid transparent; border-top: 4px solid #3a3a3a; border-bottom: 0; }
.tri.light { border-top-color: #fff; border-left-width: 4px; border-right-width: 4px; }

.titlebar { position: relative; display: flex; height: 31px; background: #2a9ade; }
.quick, .info { display: flex; align-items: center; background: #a0a0a0; border-top: 2px solid #7d7d7d; border-bottom: 1px solid #868686; box-sizing: border-box; }
.quick { width: 760px; padding-left: 51px; gap: 10px; }
.ib svg { width: 20px; height: 20px; }
.redo { margin-right: 9px; }
.tri.mid { margin: 0 -1px; }
.combo { position: relative; width: 125px; height: 28px; margin-left: -3px; }
.combo + .ib { margin-left: -5px; }
.ib.tight { margin-right: -1px; }
.combo select { appearance: none; width: 100%; height: 100%; box-sizing: border-box; border: 1px solid #707070; border-radius: 0; background: linear-gradient(#e6e6e6, #c8c8c8); padding: 0 0 0 8px; font: inherit; color: #111; }
.combo .tri { position: absolute; right: 3px; top: 12px; border-width: 5px 5px 0; }
.swatch svg { position: absolute; left: 4px; top: 5px; width: 18px; height: 18px; }
.combo.swatch select { padding-left: 26px; }
.fx { font: italic bold 20px/24px "Liberation Serif", serif; width: 20px; }
.fx sub { font-size: 12px; vertical-align: -3px; }
.custom { width: 10px; height: 8px; }
.caption { flex: 1; position: relative; display: flex; justify-content: center; align-items: center; background: linear-gradient(#2b97dc 0 9px, #1d6c9e 15px, #145a85 27px, #9dc8e4 30px); color: #10202c; }
.caption span { margin-left: 16px; text-shadow: 0 0 10px #6fa9cc, 0 0 14px #6fa9cc; }
.haze { position: absolute; right: 2px; top: 18px; width: 46px; height: 9px; background: #4d8fb8; filter: blur(3px); opacity: .6; }
.info { width: 602px; gap: 10px; padding-left: 6px; }
.play { width: 0; border: 5px solid transparent; border-left-color: #111; border-right: 0; }
.info input { width: 225px; height: 28px; box-sizing: border-box; border: 1px solid #707070; background: #f5f5f5; font: italic 14px/20px "Open Sans", "Noto Sans", sans-serif; padding: 4px 3px 0; margin-left: -3px; margin-right: -6px; }
.info input::placeholder { color: #777; opacity: 1; }
.signin { color: #fff; width: 96px; margin-left: -3px; }
.help { position: relative; margin-left: 12px; }
.help b { position: absolute; inset: 0; text-align: center; color: #1c57b5; }
.winbtns { flex: 0 0 151px; background: #2997db; border-bottom: 1px solid #9fd0ee; box-sizing: border-box; padding-left: 20px; }
.wgroup { display: flex; width: 128px; height: 24px; border: 1px solid #c3e0f2; border-top: 0; border-radius: 0 0 5px 5px; box-sizing: border-box; }
.wgroup button { flex: 1 1 35px; display: flex; justify-content: center; align-items: center; border-left: 1px solid #a5d2ee; }
.wgroup button:last-child { flex-basis: 58px; }
.wgroup button:first-child { border: 0; }
.wgroup svg { width: 20px; height: 16px; }
.appbtn { position: absolute; left: 0; top: 0; z-index: 2; width: 41px; height: 42px; box-sizing: border-box; border: 2px solid #333; background: linear-gradient(150deg, #d6d6d6, #8a8a8a 55%, #a8a8a8); }
.appbtn svg { position: absolute; left: 0; top: 1px; width: 24px; height: 29px; }
.appbtn .tri { position: absolute; right: 3px; top: 17px; border-width: 4px 4px 0; }
.appbtn span { position: absolute; right: 1px; bottom: -1px; font: bold 9px/12px "Open Sans", sans-serif; color: #222; }

.tabs { display: flex; align-items: center; gap: 1px; height: 22px; background: #3e3e3e; padding-left: 55px; color: #f4f4f4; }
.tabs a { padding: 0 12px; line-height: 20px; }
.tabs a.on { background: linear-gradient(#c9c9c9, #f6f6f6); color: #333; border: 1px solid #fff; border-bottom: 0; }
.pill { display: flex; justify-content: center; align-items: center; width: 17px; height: 10px; margin: 0 8px 3px 28px; background: #eee; border-radius: 2px; }
.pill i { border: 3px solid transparent; border-bottom: 4px solid #333; border-top: 0; }

.ribbon { display: flex; height: 119px; background: #fff; border-bottom: 1px solid #888; }
.panel { display: flex; flex-direction: column; box-sizing: border-box; border-right: 1px solid #a5a5a5; flex: none; }
.cmds { flex: 1; display: grid; padding-top: 2px; margin-right: 1px; }
.pname { display: flex; justify-content: center; align-items: center; gap: 8px; height: 20px; padding-top: 1px; margin-right: 1px; background: #eeeeee; border-top: 1px solid #cfcfcf; }
.big-tri { border-width: 5px 5px 0; }
.rest-fill { flex: 1; background: linear-gradient(#cccccc, #7c7c7c); }
.sketch { width: 100px; } .prim { width: 78px; } .create { width: 296px; } .modify { width: 422px; } .fusion { width: 67px; }
.work { width: 158px; } .pattern { width: 123px; } .surface { width: 264px; } .plastic { width: 178px; } .harness { width: 111px; } .convert { width: 91px; }
.create .cmds { grid-template-columns: 62px 56px 83px 1fr; }
.modify .cmds { grid-template-columns: 52px 44px 95px 100px 1fr; }
.work .cmds { grid-template-columns: 64px 1fr; }
.surface .cmds { grid-template-columns: 141px 1fr; }
.plastic .cmds { grid-template-columns: 69px 1fr; }
.cmd { display: flex; align-items: center; gap: 7px; height: 31px; padding-left: 7px; white-space: nowrap; }
.cmd svg { width: 20px; height: 20px; }
.cmd .tri { margin-left: 4px; }
.big { position: relative; width: 100%; display: flex; flex-direction: column; align-items: center; padding-top: 4px; white-space: nowrap; }
.big svg { width: 40px; height: 40px; margin-bottom: 5px; }
.big .tri { margin-top: 4px; }
.big.splitbtn .tri { position: absolute; right: 6px; top: 66px; }

.work-area { flex: 1; display: flex; }
.side { flex: 0 0 279px; display: flex; flex-direction: column; box-sizing: border-box; border-right: 2px solid #fafafa; padding: 2px 3px 2px; font: 12px/20px "Noto Sans", sans-serif; color: #000; overflow: hidden; }
.grip { display: flex; align-items: center; justify-content: space-between; height: 13px; padding: 0 1px; }
.grip span { width: 258px; height: 5px; border: solid #a0a0a0; border-width: 1px 1px 1px 0; box-sizing: border-box; }
.grip button { font: bold 12px/10px "Liberation Sans", sans-serif; }
.phead { display: flex; align-items: center; gap: 4px; height: 28px; padding: 0 5px 0 8px; background: #acacac; color: #fff; font: bold 14px/20px "Open Sans", sans-serif; margin-right: -1px; }
.phead.small { height: 20px; margin-top: 2px; background: #a0a0a0; padding-left: 6px; }
.q { margin-left: auto; width: 13px; height: 15px; border: 2px solid #111; border-radius: 3px; background: #ffffd0; color: #1a1a9a; font: bold 14px/15px "Open Sans", sans-serif; text-align: center; }
.small .q { width: 10px; height: 11px; line-height: 11px; border-width: 1px; margin-right: -2px; }
.ptools { display: flex; align-items: center; height: 26px; padding-left: 3px; gap: 7px; }
.ptools svg { width: 16px; height: 14px; }
.ptools span { width: 1px; height: 18px; background: #999; }
.treebox { display: flex; justify-content: space-between; border: 1px solid #646464; background: #fff; margin: 4px -1px 0 0; height: 380px; overflow: hidden; }
.treebox ul { list-style: none; margin: 0 0 0 8px; padding: 0; border-left: 1px solid #808080; }
.treebox li { display: flex; align-items: center; gap: 2px; height: 20px; }
.treebox li::before { content: ""; width: 11px; height: 1px; background: #808080; margin-right: 1px; }
.treebox li svg { width: 17px; height: 17px; }
.scroll { width: 20px; background: #f1f1f1; display: flex; flex-direction: column; align-items: center; box-sizing: border-box; padding: 8px 0; }
.up { border: 4px solid transparent; border-bottom: 5px solid #444; border-top: 0; }
.down { border: 4px solid transparent; border-top: 5px solid #444; border-bottom: 0; }
.thumb { width: 18px; height: 150px; box-sizing: border-box; border: 1px solid #979797; border-radius: 2px; background: linear-gradient(90deg, #f4f4f4, #cfcfcf); margin: 170px 0 auto; display: flex; align-items: center; justify-content: center; }
.thumb b { width: 8px; height: 6px; border: solid #777; border-width: 1px 0; }
.split { height: 2px; background: #222; margin: 2px -3px 1px; }
.ftabs { display: flex; align-items: flex-end; height: 24px; padding-left: 4px; white-space: nowrap; margin-right: -1px; }
.ftabs button { height: 21px; box-sizing: border-box; border: 1px solid #8c8c9c; border-bottom: 0; background: linear-gradient(#f3f3f3 50%, #dcdcdc); padding: 0 5px; flex: none; }
.ftabs button.on { height: 23px; background: #fff; padding: 0 8px; }
.ftabs .cut { flex: 0 1 44px; overflow: hidden; text-align: left; border-right: 0; }
.ftabs .nav { width: 19px; height: 19px; padding: 0 6px; border: 1px solid #aaa; margin-bottom: 2px; }
.la, .ra { display: block; width: 0; border: 4px solid transparent; }
.la { border-right-color: #3f62b5; border-left: 0; } .ra { border-left-color: #3f62b5; border-right: 0; }
.fbox { flex: 1; background: #fff; border: 1px solid #8c8c9c; margin: -1px 2px 7px 2px; }

.docs { flex: 1; display: flex; flex-direction: column; min-width: 0; }
.view { flex: 1; position: relative; border-left: 2px solid #5a5a5a; border-right: 2px solid #e8e8e8; background: linear-gradient(#303030, #686868 50%, #a3a3a3); overflow: hidden; }
.model { position: absolute; left: 0; top: 0; width: 100%; height: 100%; }
.digit { font: italic 26px "Liberation Sans", sans-serif; fill: #23282b; }
.ax { font: 12px "Liberation Sans", sans-serif; }
.mdi { position: absolute; right: 1px; top: 7px; display: flex; gap: 8px; }
.mdi svg { width: 12px; height: 12px; }
.cube { position: absolute; right: 22px; top: 49px; width: 80px; height: 90px; }
.cube text { font: bold 9px "Liberation Sans", sans-serif; fill: #5a5d62; }
.note { position: absolute; left: 72px; top: 294px; width: 330px; margin: 0; text-align: center; font: 20px/23px "Liberation Sans", sans-serif; color: #363636; }
.docbar { display: flex; height: 27px; border-top: 1px solid #fff; border-bottom: 2px solid #222; box-sizing: border-box; background: linear-gradient(#e2e2e2, #bcbcbc); color: #111; }
.db { width: 25px; height: 24px; box-sizing: border-box; border: 1px solid #555; background: linear-gradient(#e8e8e8, #c0c0c0); display: flex; align-items: center; justify-content: center; }
.db svg { width: 20px; height: 18px; }
.db .up { border-width: 0 6px 6px; }
.dt { display: flex; align-items: center; gap: 8px; height: 22px; padding: 0 14px 2px 10px; border: 1px solid #555; border-top: 0; border-radius: 0 0 7px 7px; background: linear-gradient(#dadada, #c6c6c6); box-sizing: border-box; }
.dt.on { background: #fff; }
.dt svg { width: 10px; height: 10px; margin-bottom: 5px; }
.callouts { position: absolute; inset: 0; width: 100%; height: 100%; z-index: 5; pointer-events: none; filter: drop-shadow(4px 5px 3px rgba(0, 0, 0, .4)); }
</style>
